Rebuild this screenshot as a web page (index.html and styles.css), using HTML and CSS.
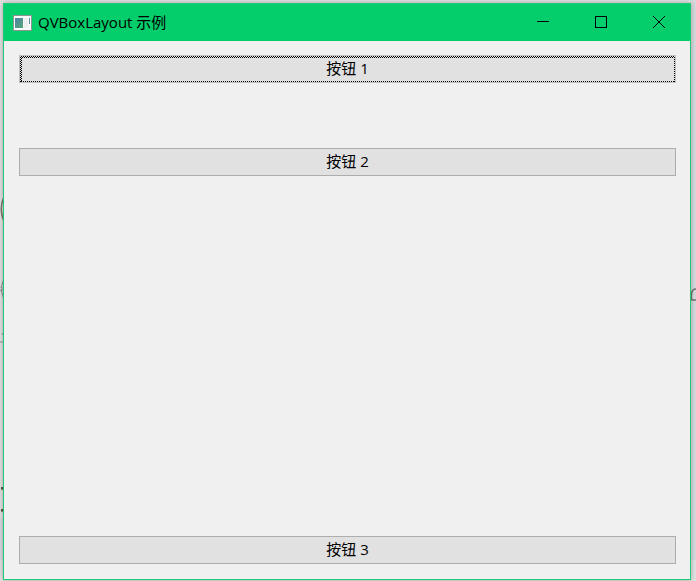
FILE: index.html
```html
<!DOCTYPE html>
<html lang="zh-CN">
<head>
  <meta charset="UTF-8">
  <meta name="viewport" content="width=device-width, initial-scale=1.0">
  <title>QVBoxLayout 示例</title>
  <link rel="stylesheet" href="styles.css">
</head>

<body>
  <!-- page that lies behind the window -->
  <svg class="backdrop backdrop-left" width="4" height="581" aria-hidden="true">
    <rect y="518" width="4" height="42" fill="#d8dae0"/>
    <g fill="none" stroke="#7d7468">
      <path d="M3.500 198Q-1 209 3.500 220" stroke-width="1.500"/>
      <path d="M3.500 280L1 288H4M0 290H4M1 290L3.500 298" stroke="#8a8a8e"/>
      <path d="M2 333L3 335M0 342H4" stroke="#999"/>
    </g>
    <path d="M1 488h3M2 487v3M1 510h3M2 509v3" stroke="#322408"/>
  </svg>
  <svg class="backdrop backdrop-right" width="6" height="581" aria-hidden="true">
    <rect y="0" width="6" height="560" fill="#d8d9dc"/>
    <path d="M6 289Q2 289 1.500 294T2 300H6" fill="none" stroke="#6f7472" stroke-width="1.500"/>
  </svg>

  <div class="window">
    <header class="title-bar">
      <svg class="app-icon" width="19" height="16" viewBox="0 0 19 16" aria-hidden="true">
        <defs>
          <linearGradient id="pane" x1="0" y1="0" x2="1" y2="1">
            <stop offset="0" stop-color="#4d80a8"/>
            <stop offset="1" stop-color="#5aa878"/>
          </linearGradient>
        </defs>
        <rect x="0.500" y="0.500" width="18" height="15" fill="#fafafa" stroke="#8b9690"/>
        <rect x="2" y="3" width="8" height="10" fill="url(#pane)"/>
        <rect x="11" y="3" width="4" height="10" fill="#eef0f2"/>
        <rect x="16" y="3" width="1" height="6" fill="#5f8fa8"/>
      </svg>
      <h1>QVBoxLayout 示例</h1>
      <div class="window-controls">
        <button type="button" aria-label="最小化">
          <svg width="12" height="12"><path d="M0 5.500H12"/></svg>
        </button>
        <button type="button" aria-label="最大化">
          <svg width="12" height="12"><rect x="0.500" y="0.500" width="11" height="11"/></svg>
        </button>
        <button type="button" aria-label="关闭">
          <svg width="12" height="12"><path d="M0 0L12 12M12 0L0 12"/></svg>
        </button>
      </div>
    </header>

    <main class="vbox">
      <button type="button" class="push-btn focused">按钮 1</button>
      <button type="button" class="push-btn second">按钮 2</button>
      <button type="button" class="push-btn last">按钮 3</button>
    </main>
  </div>
</body>
</html>
```

FILE: styles.css
```css
:root {
  --accent-color: #03ce6b;
  --window-color: #f0f0f0;
  --button-color: #e1e1e1;
  --button-border: #adadad;
}

* {
  margin: 0;
  padding: 0;
  box-sizing: border-box;
  font-family: "Open Sans", "Noto Sans CJK SC", sans-serif;
}

body {
  display: flex;
  height: 100vh;
  padding: 3px 5px 1px 3px;
  background-color: #e2e2e2;
  color: #000;
  overflow: hidden;
}

.backdrop {
  position: absolute;
  top: 0;
}

.backdrop-left {
  left: 0;
}

.backdrop-right {
  right: 0;
}

.window {
  position: relative;
  flex: 1;
  display: flex;
  flex-direction: column;
  background-color: var(--window-color);
  border: 1px solid #20c878;
  box-shadow: 0 0 5px rgba(0, 0, 0, 0.3);
}

.title-bar {
  display: flex;
  align-items: center;
  height: 37px;
  padding-left: 9px;
  background-color: var(--accent-color);
}

.title-bar h1 {
  flex: 1;
  margin-left: 6px;
  padding-bottom: 2px;
  font-size: 15px;
  line-height: 20px;
  font-weight: 400;
}

.window-controls {
  display: flex;
  height: 100%;
  padding-right: 2px;
}

.window-controls button {
  display: flex;
  align-items: center;
  justify-content: center;
  width: 58px;
  padding-bottom: 2px;
  border: none;
  background: none;
}

.window-controls svg {
  fill: none;
  stroke: #000;
}

.vbox {
  flex: 1;
  display: flex;
  flex-direction: column;
  padding: 14px 14px 15px 15px;
}

.push-btn {
  height: 28px;
  padding-bottom: 2px;
  border: 1px solid var(--button-border);
  background-color: var(--button-color);
  color: #000;
  font-size: 15px;
  line-height: 20px;
}

.push-btn:hover {
  background-color: #e5f1fb;
  border-color: #0078d7;
}

/* dotted focus frame, doubled on the top and left sides */
.focused {
  --dots: repeating-conic-gradient(#000 0 25%, transparent 0 50%);
  border-color: #c0c0c0;
  background-image: var(--dots), var(--dots), var(--dots), var(--dots);
  background-size: 2px 2px;
  background-repeat: repeat-x, repeat-y, repeat-x, repeat-y;
  background-position: left top, left top, left bottom -1px, right -1px top;
  background-clip: padding-box;
}

.second {
  margin-top: 65px;
}

.last {
  margin-top: auto;
}
```
